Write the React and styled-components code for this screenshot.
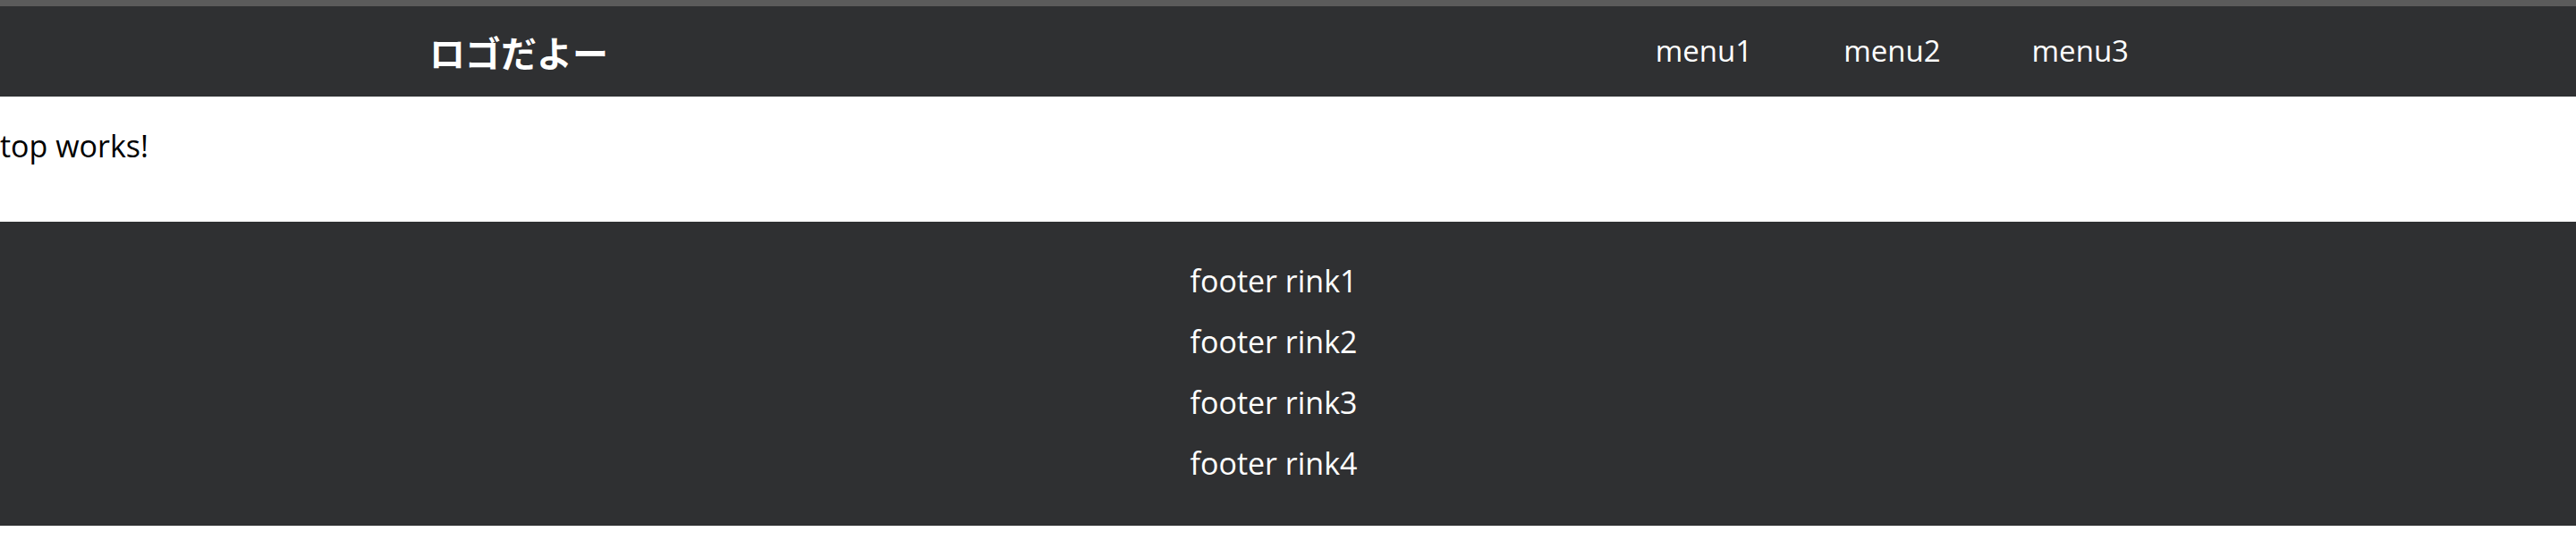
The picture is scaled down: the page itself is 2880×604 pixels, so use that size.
import React from "react";
import styled, { createGlobalStyle } from "styled-components";

const GlobalStyle = createGlobalStyle`
  html, body {
    margin: 0;
    padding: 0;
    background: #ffffff;
    font-family: "Open Sans", "Noto Sans CJK JP", sans-serif;
  }
  ul {
    margin: 0;
    padding: 0;
    list-style: none;
  }
`;

const TopEdge = styled.div`
  height: 7px;
  background: #5b5b5b;
`;

const HeaderBar = styled.header`
  height: 101px;
  background: #2f3032;
  display: flex;
  justify-content: center;
`;

const HeaderInner = styled.div`
  width: 1920px;
  display: flex;
  align-items: center;
  justify-content: space-between;
`;

const Logo = styled.h1`
  margin: 0;
  color: #ffffff;
  font-family: "Noto Sans CJK JP", sans-serif;
  font-weight: 700;
  font-size: 40px;
  line-height: 1;
`;

const NavList = styled.ul`
  display: flex;
  gap: 62px;
`;

const NavLink = styled.a`
  display: block;
  padding: 0 20px;
  color: #ffffff;
  font-size: 33px;
  line-height: 1.4;
  text-decoration: none;
`;

const Main = styled.main`
  height: 140px;
  box-sizing: border-box;
  padding-top: 31px;
`;

const Message = styled.p`
  margin: 0;
  color: #000000;
  font-size: 34px;
  line-height: 48px;
`;

const FooterBar = styled.footer`
  height: 340px;
  box-sizing: border-box;
  padding-top: 32px;
  background: #2f3032;
  display: flex;
  justify-content: center;
`;

const FooterList = styled.ul`
  padding-right: 32px;
`;

const FooterLink = styled.a`
  display: block;
  color: #ffffff;
  font-size: 34px;
  line-height: 68px;
  text-decoration: none;
`;

const menus = ["menu1", "menu2", "menu3"];
const footerLinks = ["footer rink1", "footer rink2", "footer rink3", "footer rink4"];

function App() {
  return (
    <>
      <GlobalStyle />
      <TopEdge />
      <HeaderBar>
        <HeaderInner>
          <Logo>ロゴだよー</Logo>
          <nav>
            <NavList>
              {menus.map((m) => (
                <li key={m}>
                  <NavLink href="#">{m}</NavLink>
                </li>
              ))}
            </NavList>
          </nav>
        </HeaderInner>
      </HeaderBar>
      <Main>
        <Message>top works!</Message>
      </Main>
      <FooterBar>
        <nav>
          <FooterList>
            {footerLinks.map((f) => (
              <li key={f}>
                <FooterLink href="#">{f}</FooterLink>
              </li>
            ))}
          </FooterList>
        </nav>
      </FooterBar>
    </>
  );
}

export default App;
